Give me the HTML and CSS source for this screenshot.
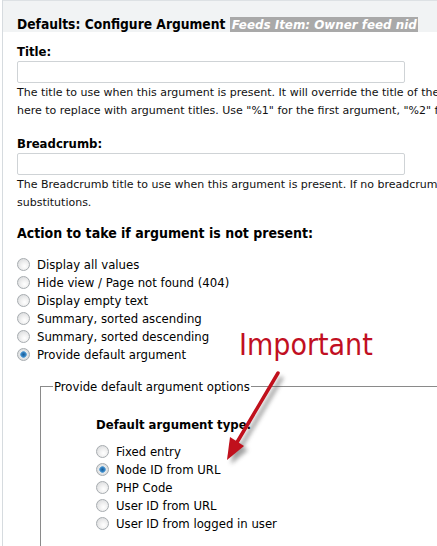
FILE: index.html
```html
<!DOCTYPE html>
<html>
<head>
<meta charset="utf-8">
<link rel="stylesheet" href="styles.css">
</head>
<body>
<div class="panel">
  <div class="panel-head">
    <h2 class="panel-title">Defaults: Configure Argument <span class="hint">Feeds Item: Owner feed nid</span></h2>
  </div>
  <div class="panel-body">
    <div class="field">
      <label class="field-label">Title:</label>
      <input class="text-input" type="text">
      <div class="description">The title to use when this argument is present. It will override the title of the view and titles from previous arguments. You can use percent substitution<br>here to replace with argument titles. Use "%1" for the first argument, "%2" for the second, etc.</div>
    </div>
    <div class="field field-tight">
      <label class="field-label">Breadcrumb:</label>
      <input class="text-input" type="text">
      <div class="description">The Breadcrumb title to use when this argument is present. If no breadcrumb title is set here, default Title values will be used, see "Title" for percent<br>substitutions.</div>
    </div>
    <div class="field">
      <label class="field-label action-label">Action to take if argument is not present:</label>
      <div class="radios">
        <label class="radio"><input type="radio" name="act"> Display all values</label>
        <label class="radio"><input type="radio" name="act"> Hide view / Page not found (404)</label>
        <label class="radio"><input type="radio" name="act"> Display empty text</label>
        <label class="radio"><input type="radio" name="act"> Summary, sorted ascending</label>
        <label class="radio"><input type="radio" name="act"> Summary, sorted descending</label>
        <label class="radio"><input type="radio" name="act" checked> Provide default argument</label>
      </div>
    </div>
    <fieldset class="options">
      <legend class="options-legend">Provide default argument options</legend>
      <div class="field options-field">
        <label class="field-label">Default argument type:</label>
        <div class="radios">
          <label class="radio"><input type="radio" name="def"> Fixed entry</label>
          <label class="radio"><input type="radio" name="def" checked> Node ID from URL</label>
          <label class="radio"><input type="radio" name="def"> PHP Code</label>
          <label class="radio"><input type="radio" name="def"> User ID from URL</label>
          <label class="radio"><input type="radio" name="def"> User ID from logged in user</label>
        </div>
      </div>
    </fieldset>
  </div>
</div>
<div class="callout">Important</div>
<svg class="arrow" width="437" height="546" viewBox="0 0 437 546">
  <defs>
    <filter id="sh" x="-50%" y="-50%" width="200%" height="200%">
      <feGaussianBlur stdDeviation="2"/>
    </filter>
  </defs>
  <g transform="translate(4,4)" opacity="0.55" filter="url(#sh)" fill="#555" stroke="#555">
    <line x1="278" y1="373" x2="236" y2="444" stroke-width="4"/>
    <polygon points="227,460 244,446 230,437" stroke="none"/>
  </g>
  <line x1="278" y1="373" x2="236" y2="444" stroke="#c0101c" stroke-width="3.5" stroke-linecap="round"/>
  <polygon points="227,460 244,446 230,437" fill="#c0101c"/>
</svg>
</body>
</html>
```
FILE: styles.css
```css
html, body {
  margin: 0;
  padding: 0;
  background: #fff;
  overflow: hidden;
  width: 437px;
  height: 546px;
}
body {
  font-family: "DejaVu Sans Condensed", "DejaVu Sans", sans-serif;
  color: #000;
  position: relative;
}
.panel {
  margin-left: 2px;
  border-left: 1px solid #d6dbdf;
  width: 800px;
  min-height: 546px;
}
.panel-head {
  background: #f1f3f4;
  border-top: 1px solid #dde1e4;
  height: 32px;
  box-sizing: border-box;
  padding: 15px 0 0 14px;
}
.panel-title {
  margin: 0;
  font-size: 13.7px;
  line-height: 17px;
  font-weight: bold;
  white-space: nowrap;
}
.hint {
  background: #a9a9a9;
  color: #fff;
  font-family: "DejaVu Sans", sans-serif;
  font-style: italic;
  font-size: 11.9px;
  padding: 1px 1px 0 2px;
}
.panel-body {
  padding: 12px 0 0 14px;
}
.field {
  margin-bottom: 16px;
}
.field-tight {
  margin-bottom: 13px;
}
.field-label {
  display: block;
  font-weight: bold;
  font-size: 13px;
  line-height: 16px;
}
.action-label {
  font-size: 14px;
  margin-bottom: 14px;
}
.text-input {
  display: block;
  width: 388px;
  height: 22px;
  box-sizing: border-box;
  border: 1px solid #cfd3d6;
  border-radius: 2px;
  margin: 1px 0 1px;
  padding: 0;
}
.description {
  font-family: "DejaVu Sans", sans-serif;
  font-size: 11px;
  line-height: 18px;
  white-space: nowrap;
  color: #111;
}
.radios {
  display: flex;
  flex-direction: column;
}
.radio {
  display: flex;
  align-items: center;
  height: 18px;
  font-size: 13px;
  white-space: nowrap;
}
.radio input {
  appearance: none;
  -webkit-appearance: none;
  width: 13px;
  height: 13px;
  margin: 0 7px 0 0;
  border-radius: 50%;
  border: 1px solid #a7acb0;
  box-sizing: border-box;
  background: radial-gradient(circle at 60% 65%, #ffffff 0%, #f2f2f2 35%, #d2d4d6 100%);
}
.radio input:checked {
  background: radial-gradient(circle at 50% 50%, #1d5d95 0, #2f7fc0 2px, #6aa8d8 3px, #e7e9ea 3.6px, #d0d2d4 100%);
}
.options {
  margin: 14px 0 0 23px;
  padding: 0 0 0 12px;
  border: 1px solid #8a8a8a;
  border-right: none;
  border-bottom: none;
  min-height: 200px;
}
.options-legend {
  font-size: 13px;
  padding: 0 1px;
}
.options-field {
  margin-left: 43px;
  padding-top: 23px;
}
.options .field-label {
  margin-bottom: 9px;
}
.callout {
  position: absolute;
  left: 239px;
  top: 324px;
  font-size: 30px;
  color: #c10f22;
  line-height: 42px;
  font-family: "DejaVu Sans Condensed", "DejaVu Sans", sans-serif;
}
.arrow {
  position: absolute;
  left: 0;
  top: 0;
  pointer-events: none;
}
```
